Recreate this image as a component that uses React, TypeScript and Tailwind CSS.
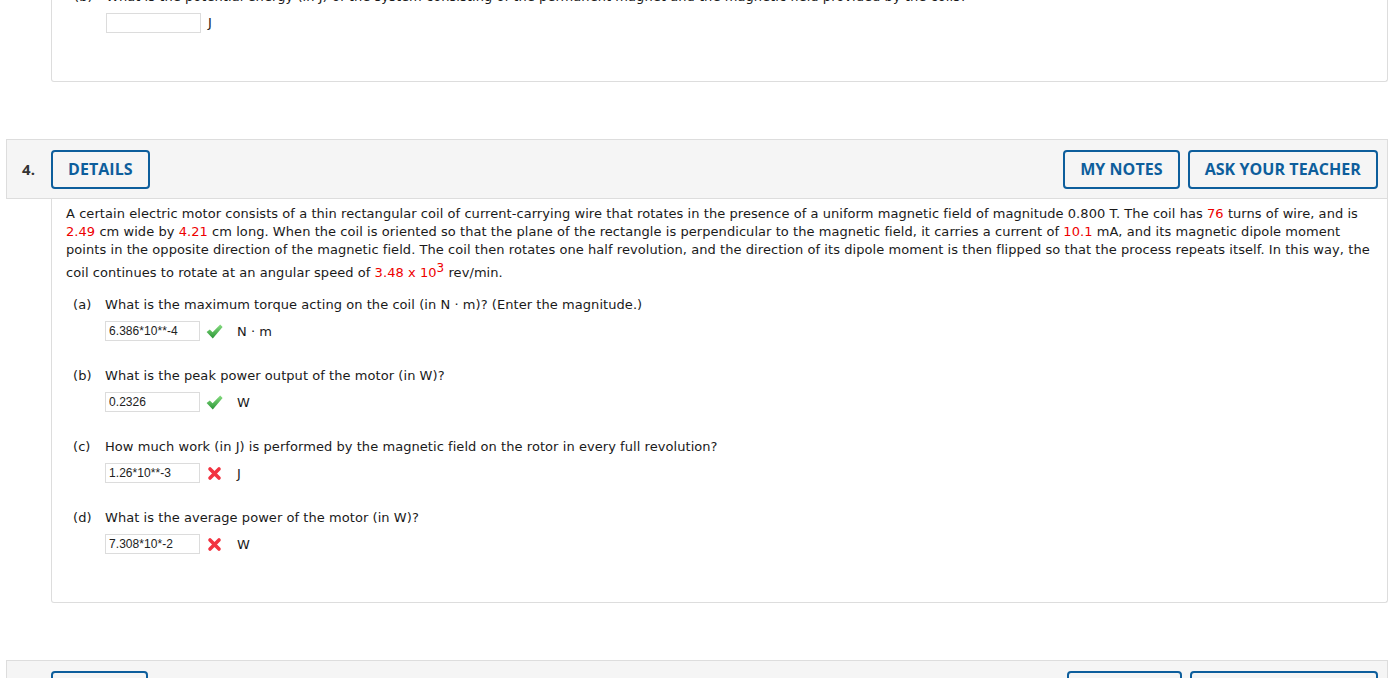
import React from 'react';

const verdana = { fontFamily: '"DejaVu Sans", Verdana, sans-serif', letterSpacing: '0.06px' };

const Check = () => (
  <svg width="17" height="15" viewBox="0 0 17 15" className="shrink-0">
    <defs>
      <linearGradient id="g" x1="0" y1="0" x2="0" y2="1">
        <stop offset="0" stopColor="#86dc80" />
        <stop offset="1" stopColor="#2a9636" />
      </linearGradient>
    </defs>
    <path d="M0.6 8 L3.8 5.4 L6.6 8.2 L14.2 0.6 L16.6 3 L6.8 14.4 Z" fill="url(#g)" />
  </svg>
);

const Cross = () => (
  <svg width="15" height="15" viewBox="0 0 15 15" className="shrink-0">
    <path d="M3 3 L12 12 M12 3 L3 12" stroke="#f23340" strokeWidth="3.6" strokeLinecap="round" />
  </svg>
);

const Btn = ({ children, className = '' }: { children: React.ReactNode; className?: string }) => (
  <button
    className={`h-[39px] px-[15px] border-2 border-[#0d5e9c] rounded-[4px] text-[#0d5e9c] text-[16px] font-bold bg-transparent ${className}`}
    style={{ fontFamily: '"Open Sans", sans-serif' }}
  >
    {children}
  </button>
);

const Answer = ({ value, ok, unit }: { value: string; ok?: boolean; unit: string }) => (
  <div className="flex items-center h-[20px]">
    <input
      readOnly
      value={value}
      className="w-[95px] h-[20px] border border-[#dcdcdc] px-[3px] text-[12px] text-[#222] outline-none"
      style={{ fontFamily: '"Liberation Sans", Arial, sans-serif' }}
    />
    {value !== '' && <span className="ml-[7px] w-[15px] flex justify-center">{ok ? <Check /> : <Cross />}</span>}
    <span className={value !== '' ? 'ml-[15px]' : 'ml-[7px]'}>{unit}</span>
  </div>
);

const Part = ({ label, q, children }: { label: string; q: React.ReactNode; children: React.ReactNode }) => (
  <div className="flex pl-[7px]">
    <div className="w-[32px] shrink-0 leading-[18px]">{label}</div>
    <div>
      <div className="leading-[18px]">{q}</div>
      <div className="mt-[7px]">{children}</div>
    </div>
  </div>
);

const R = ({ children }: { children: React.ReactNode }) => <span className="text-[#ee0000]">{children}</span>;

export default function App() {
  return (
    <div className="w-[1395px] h-[678px] overflow-hidden bg-white text-[13px] text-[#1a1a1a]" style={verdana}>
      <div className="ml-[6px] w-[1382px]">
        {/* previous question tail */}
        <div className="ml-[45px] border border-t-0 border-[#dddddd] rounded-b-[3px] h-[94px] -mt-[12px]">
          <div className="flex pl-[22px] leading-[18px]">
            <div className="w-[32px]">(b)</div>
            <div>What is the potential energy (in J) of the system consisting of the permanent magnet and the magnetic field provided by the coils?</div>
          </div>
          <div className="pl-[54px] mt-[7px]">
            <Answer value="" unit="J" />
          </div>
        </div>

        {/* question 4 */}
        <div className="mt-[57px]">
          <div className="h-[60px] bg-[#f5f5f5] border border-[#dddddd] flex items-center pl-[15px] pr-[9px]">
            <span className="text-[15px] font-bold text-[#333] w-[29px]" style={{ fontFamily: '"Open Sans", sans-serif' }}>4.</span>
            <Btn>DETAILS</Btn>
            <div className="ml-auto flex gap-[8px]">
              <Btn>MY NOTES</Btn>
              <Btn>ASK YOUR TEACHER</Btn>
            </div>
          </div>
          <div className="ml-[45px] border border-t-0 border-[#dddddd] rounded-b-[3px] h-[404px] px-[14px] pt-[6px]">
            <p className="leading-[18px]">
              A certain electric motor consists of a thin rectangular coil of current-carrying wire that rotates in the presence of a uniform magnetic field of magnitude 0.800 T. The coil has <R>76</R> turns of wire, and is <R>2.49</R> cm wide by <R>4.21</R> cm long. When the coil is oriented so that the plane of the rectangle is perpendicular to the magnetic field, it carries a current of <R>10.1</R> mA, and its magnetic dipole moment points in the opposite direction of the magnetic field. The coil then rotates one half revolution, and the direction of its dipole moment is then flipped so that the process repeats itself. In this way, the coil continues to rotate at an angular speed of <R>3.48 x 10<sup className="text-[12px] align-super top-0 leading-[18px]">3</sup></R> rev/min.
            </p>
            <div className="mt-[14px] flex flex-col gap-[26px]">
              <Part label="(a)" q="What is the maximum torque acting on the coil (in N · m)? (Enter the magnitude.)">
                <Answer value="6.386*10**-4" ok unit="N · m" />
              </Part>
              <Part label="(b)" q="What is the peak power output of the motor (in W)?">
                <Answer value="0.2326" ok unit="W" />
              </Part>
              <Part label="(c)" q="How much work (in J) is performed by the magnetic field on the rotor in every full revolution?">
                <Answer value="1.26*10**-3" unit="J" />
              </Part>
              <Part label="(d)" q="What is the average power of the motor (in W)?">
                <Answer value="7.308*10*-2" unit="W" />
              </Part>
            </div>
          </div>
        </div>

        {/* next question header */}
        <div className="mt-[57px] h-[60px] bg-[#f5f5f5] border border-[#dddddd] flex items-center pl-[15px] pr-[9px]">
          <span className="w-[29px]" />
          <Btn className="w-[97px]">&nbsp;</Btn>
          <div className="ml-auto flex gap-[8px]">
            <Btn className="w-[115px]">&nbsp;</Btn>
            <Btn className="w-[188px]">&nbsp;</Btn>
          </div>
        </div>
      </div>
    </div>
  );
}
